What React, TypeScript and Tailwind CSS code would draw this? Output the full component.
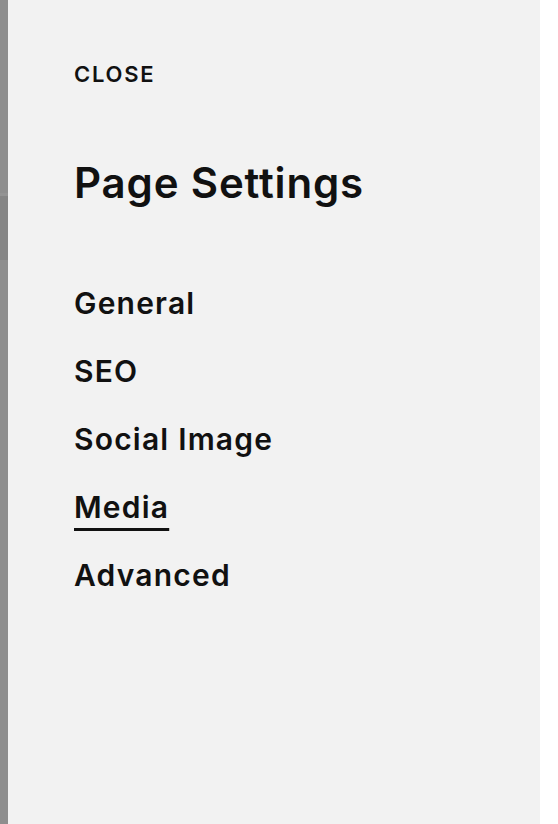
import React from 'react';

const items = ['General', 'SEO', 'Social Image', 'Media', 'Advanced'];

const App: React.FC = () => {
  const active = 'Media';

  return (
    <div className="flex h-[824px] w-[558px] bg-white" style={{ fontFamily: 'Inter, "Noto Sans", sans-serif' }}>
      <div className="flex w-[8px] flex-col">
        <div className="h-[193px] bg-[#8e8e8e]" />
        <div className="h-[3px] bg-[#939393]" />
        <div className="h-[64px] bg-[#858585]" />
        <div className="flex-1 bg-[#8e8e8e]" />
      </div>
      <div className="flex w-[532px] flex-col bg-[#f2f2f2] pl-[66px] pt-[63px] text-[#111111]">
        <button className="self-start text-[22px] font-semibold uppercase leading-[22px] tracking-[0.08em]">
          Close
        </button>
        <h1 className="mt-[77px] text-[42px] font-semibold leading-[42px] tracking-[0.02em]">Page Settings</h1>
        <nav className="mt-[84px] flex flex-col gap-[38px]">
          {items.map((item) => (
            <a
              key={item}
              href="#"
              className={
                item === active
                  ? 'self-start text-[30px] font-semibold leading-[30px] tracking-[0.04em] underline decoration-[3px] underline-offset-[10px]'
                  : 'self-start text-[30px] font-semibold leading-[30px] tracking-[0.04em]'
              }
            >
              {item}
            </a>
          ))}
        </nav>
      </div>
    </div>
  );
};

export default App;
